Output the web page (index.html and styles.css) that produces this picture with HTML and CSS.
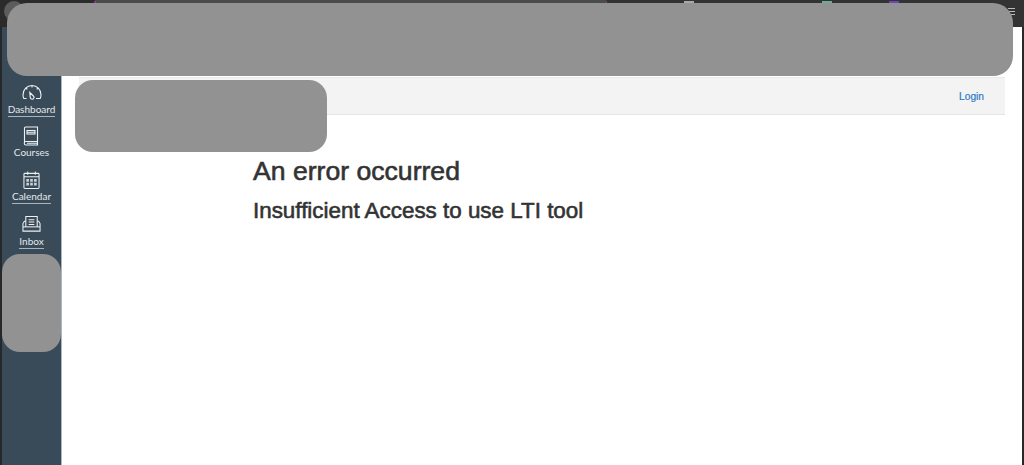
FILE: index.html
```html
<!DOCTYPE html>
<html lang="en">
<head>
    <meta charset="UTF-8">
    <title>Error</title>
    <link rel="stylesheet" href="styles.css">
</head>
<body>
    <div class="topbar">
        <span class="corner-blob"></span>
        <span class="tab-mark mark-pink"></span>
        <span class="tab-mark mark-pink2"></span>
        <span class="tab-mark mark-grey"></span>
        <span class="tab-mark mark-green"></span>
        <span class="tab-mark mark-purple"></span>
        <span class="menu-lines"></span>
    </div>
    <div class="app">
        <!-- Global nav -->
        <nav class="sidebar">
            <a class="nav-item underlined">
                <svg viewBox="0 0 20 18" width="20" height="18" fill="none" stroke="#eef1f3" stroke-width="1.1">
                    <path d="M4.500 15.500H1.800C1.200 14.400 1 13.200 1 12 1 6.500 5 2.500 10 2.500s9 4 9 9.500c0 1.200-.2 2.400-.8 3.500H14"/>
                    <path d="M7.800 9.500l3.600 3.500a1.700 1.700 0 0 1-2.400 2.700 1.700 1.700 0 0 1-.8-1.700z"/>
                    <path d="M10 2.500v2M4 5l1.300 1.300M16 5l-1.300 1.300"/>
                </svg>
                <span>Dashboard</span>
            </a>
            <a class="nav-item">
                <svg viewBox="0 0 16 20" width="16" height="20" fill="none" stroke="#eef1f3" stroke-width="1.1">
                    <path d="M1.500 16V2A1 1 0 0 1 2.500 1h12v14.500H3A1.700 1.700 0 0 0 3 19h11.500v-3.500"/>
                    <rect x="4" y="4.500" width="8" height="3.500"/>
                    <path d="M4 6.200h8M4 17.300h10"/>
                </svg>
                <span>Courses</span>
            </a>
            <a class="nav-item underlined">
                <svg viewBox="0 0 18 20" width="17" height="19" fill="none" stroke="#eef1f3" stroke-width="1.1">
                    <rect x="1" y="3" width="16" height="16" rx="1"/>
                    <path d="M1 6.500h16M5 1v3.500M13 1v3.500"/>
                    <path d="M3.500 9h2.800v2.800H3.500zM7.600 9h2.800v2.800H7.600zM11.700 9h2.800v2.800h-2.800zM3.500 13h2.800v2.800H3.500zM7.600 13h2.800v2.800H7.600zM11.700 13h2.800v2.800h-2.800z" fill="#c9d0d5" stroke="none"/>
                </svg>
                <span>Calendar</span>
            </a>
            <a class="nav-item underlined">
                <svg viewBox="0 0 20 18" width="19" height="17" fill="none" stroke="#eef1f3" stroke-width="1.1">
                    <path d="M4 12V1h12v11"/>
                    <path d="M7 4.500h6M7 7h6M7 9.500h6"/>
                    <path d="M4 6H2.500L1 8.500V16.500h18V8.500L17.500 6H16"/>
                    <path d="M1 12h18"/>
                </svg>
                <span>Inbox</span>
            </a>
        </nav>

        <main class="content">
            <div class="toolbar">
                <a class="login">Login</a>
            </div>
            <div class="message">
                <h1>An error occurred</h1>
                <h2>Insufficient Access to use LTI tool</h2>
            </div>
        </main>
    </div>

    <!-- redacted areas -->
    <div class="redact redact-top"></div>
    <div class="redact redact-crumb"></div>
    <div class="redact redact-nav"></div>
</body>
</html>
```

FILE: styles.css
```css
html, body {
    height: 100%;
}

body {
    margin: 0;
    font-family: "Liberation Sans", Arial, sans-serif;
    background-color: #ffffff;
    overflow: hidden;
}

.topbar {
    position: relative;
    height: 27px;
    background-color: #333333;
    background-image: linear-gradient(90deg, #2b2b2b 0, #2b2b2b 95px, #4b4b4b 95px, #4b4b4b 606px, #333333 606px);
}

.corner-blob {
    position: absolute;
    left: 4px;
    top: 1px;
    width: 20px;
    height: 20px;
    border-radius: 50%;
    background-color: #5c5c5c;
}

.tab-mark {
    position: absolute;
    top: 1px;
    width: 10px;
    height: 2px;
}

.mark-pink {
    left: 94px;
    width: 2px;
    background-color: #8a3c8a;
}

.mark-pink2 {
    left: 606px;
    width: 1px;
    background-color: #8a3c8a;
}

.mark-grey {
    left: 684px;
    background-color: #a8a8a8;
}

.mark-green {
    left: 822px;
    background-color: #6bab9a;
}

.mark-purple {
    left: 889px;
    background-color: #6e45b5;
}

.menu-lines {
    position: absolute;
    top: 8px;
    left: 1008px;
    width: 7px;
    height: 5px;
    border-top: 1px solid #bbbbbb;
    border-bottom: 1px solid #bbbbbb;
    background: linear-gradient(#bbbbbb, #bbbbbb) center / 100% 1px no-repeat;
}

.app {
    display: flex;
    height: 438px;
    border-left: 2px solid #26292c;
    border-right: 2px solid #26292c;
}

/* Sidebar */
.sidebar {
    width: 59px;
    flex-shrink: 0;
    background-color: #394b58;
    border-right: 1px solid #a9b7c2;
    display: flex;
    flex-direction: column;
    align-items: center;
    padding-top: 55px;
    gap: 7px;
}

.nav-item {
    display: flex;
    flex-direction: column;
    align-items: center;
    height: 37px;
    color: #e4e8eb;
    font-family: Lato, sans-serif;
    font-size: 10px;
    line-height: 12px;
}

.nav-item svg {
    height: 20px;
}

.nav-item:first-child svg {
    margin-bottom: 1px;
}

.nav-item:last-child svg {
    margin-bottom: 1px;
}

.nav-item span {
    padding-bottom: 1px;
}

.nav-item.underlined span {
    border-bottom: 1px solid #a9b5bd;
}

/* Content */
.content {
    flex: 1;
    padding: 50px 17px 0 17px;
}

.toolbar {
    display: flex;
    justify-content: flex-end;
    align-items: center;
    height: 36px;
    background-color: #f3f3f3;
    border-top: 1px solid #e9e9e9;
    border-bottom: 1px solid #e6e6e6;
    padding-right: 21px;
}

.login {
    color: #2f78c4;
    font-size: 10.2px;
    -webkit-text-stroke: 0.2px #2f78c4;
}

.message {
    padding: 41px 0 0 174px;
    color: #333333;
}

.message h1 {
    margin: 0;
    font-size: 26.6px;
    font-weight: normal;
    line-height: 30px;
    -webkit-text-stroke: 0.6px #333333;
}

.message h2 {
    margin: 12px 0 0;
    font-size: 22.4px;
    font-weight: normal;
    line-height: 26px;
    -webkit-text-stroke: 0.6px #333333;
}

/* Grey blocks over the page */
.redact {
    position: absolute;
    background-color: #929292;
}

.redact-top {
    left: 7px;
    top: 3px;
    width: 1006px;
    height: 73px;
    border-radius: 20px;
}

.redact-crumb {
    left: 75px;
    top: 80px;
    width: 252px;
    height: 72px;
    border-radius: 18px;
}

.redact-nav {
    left: 2px;
    top: 254px;
    width: 59px;
    height: 98px;
    border-radius: 18px;
}
```
